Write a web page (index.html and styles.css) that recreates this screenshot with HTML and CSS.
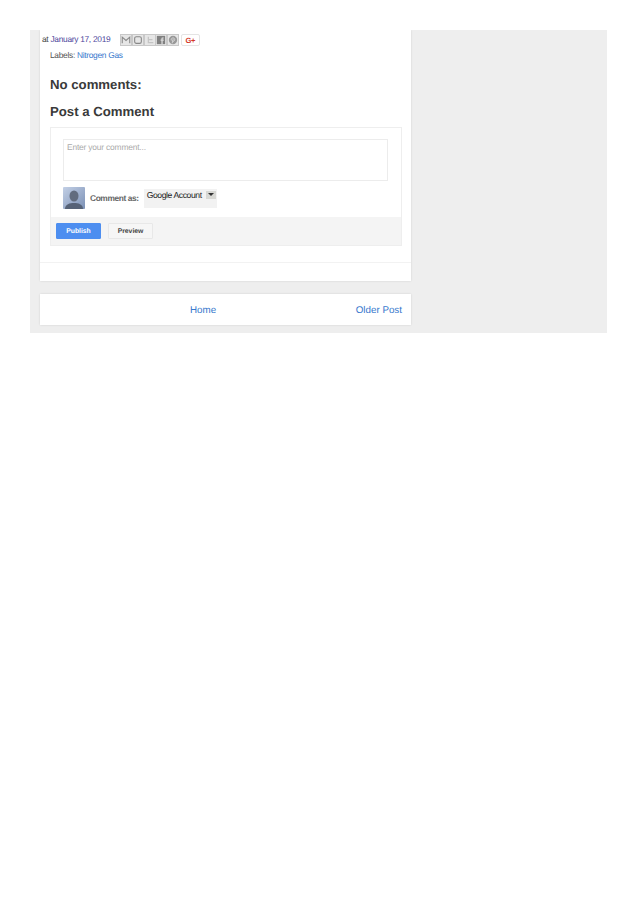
FILE: index.html
```html
<!DOCTYPE html>
<html lang="en">
<head>
    <meta charset="UTF-8">
    <title>Post</title>
    <link rel="stylesheet" href="styles.css">
</head>
<body>
    <div class="page">
        <div class="card post-card">
            <div class="post-meta">
                <span class="post-date">at <a class="date-link" href="#">January 17, 2019</a></span>
                <div class="share-group">
                    <a class="share-btn" href="#"><svg viewBox="0 0 12 12"><path d="M1.500 10V2.500L6 6.500l4.500-4V10" fill="none" stroke="#888" stroke-width="1.300"/></svg></a>
                    <a class="share-btn" href="#"><svg viewBox="0 0 12 12"><rect x="2" y="2" width="8" height="8" rx="2" fill="none" stroke="#888" stroke-width="1.300"/></svg></a>
                    <a class="share-btn" href="#"><svg viewBox="0 0 12 12"><path d="M4 2v7h6M4 5.500h5" fill="none" stroke="#c4c4c4" stroke-width="1.500"/></svg></a>
                    <a class="share-btn" href="#"><svg viewBox="0 0 12 12"><rect x="1" y="1" width="10" height="10" fill="#808080"/><path d="M8 11V7h1.300V5.500H8V4.300h1.300V3H7.700C7 3 6.500 3.500 6.500 4.300v1.200H5.500V7h1v4z" fill="#ddd"/></svg></a>
                    <a class="share-btn" href="#"><svg viewBox="0 0 12 12"><circle cx="6" cy="6" r="5" fill="#999"/><path d="M5 10l1.300-5.500M4 6.500C3.300 4.500 5 3.300 6.500 3.500c2 .3 2 3.500.2 4-.7.1-1.200-.3-1.300-.7" fill="none" stroke="#ddd" stroke-width="1"/></svg></a>
                </div>
                <a class="gplus-btn" href="#">G+</a>
            </div>
            <div class="post-labels">Labels: <a href="#">Nitrogen Gas</a></div>
            <h3 class="no-comments">No comments:</h3>
            <h3 class="post-title">Post a Comment</h3>
            <div class="comment-box">
                <div class="comment-form">
                    <div class="comment-input">Enter your comment...</div>
                    <div class="comment-as">
                        <svg class="avatar" viewBox="0 0 22 22">
                            <defs>
                                <linearGradient id="avatarBg" x1="0" y1="0" x2="1" y2="1">
                                    <stop offset="0" stop-color="#c3d0e6"/>
                                    <stop offset="1" stop-color="#7b90b5"/>
                                </linearGradient>
                            </defs>
                            <rect width="22" height="22" rx="1" fill="url(#avatarBg)"/>
                            <ellipse cx="11" cy="9" rx="4.500" ry="5.500" fill="#626c7e"/>
                            <path d="M2 22c0-5 5-6 9-6s9 1 9 6z" fill="#566277"/>
                        </svg>
                        <span class="comment-label">Comment as:</span>
                        <div class="account-select">
                            <span>Google Account</span>
                            <span class="select-arrow"></span>
                        </div>
                    </div>
                </div>
                <div class="comment-actions">
                    <a class="btn btn-primary" href="#">Publish</a>
                    <a class="btn" href="#">Preview</a>
                </div>
            </div>
            <div class="post-footer"></div>
        </div>
        <div class="card pager">
            <a class="pager-home" href="#">Home</a>
            <a class="pager-older" href="#">Older Post</a>
        </div>
    </div>
</body>
</html>
```

FILE: styles.css
```css
body {
    font-family: 'Liberation Sans', Arial, sans-serif;
    background: white;
    margin: 0;
    text-rendering: geometricPrecision;
}

a {
    color: #3778cd;
    text-decoration: none;
}

.page {
    background: #eeeeee;
    width: 577px;
    height: 303px;
    margin: 30px 0 0 30px;
    padding: 0 0 0 10px;
    box-sizing: border-box;
    overflow: hidden;
}

.card {
    background: white;
    width: 371px;
    box-sizing: border-box;
    box-shadow: 0 0 2px rgba(0,0,0,0.12);
}

.post-card {
    height: 251px;
    margin-bottom: 13px;
    padding: 0 10px;
}

.post-meta {
    display: flex;
    align-items: center;
    height: 20px;
    margin-left: -8px;
    font-size: 8.400px;
    letter-spacing: -0.300px;
    color: #444;
}

.post-date {
    padding-bottom: 2px;
}

.date-link {
    color: #4d469c;
}

.share-group {
    display: flex;
    margin-left: 10px;
}

.share-btn {
    display: block;
    width: 12px;
    height: 12px;
    box-sizing: border-box;
    background: #e6e6e6;
    border: 1px solid #c8c8c8;
    margin-right: -0.300px;
}

.share-btn svg {
    display: block;
    width: 10px;
    height: 10px;
}

.gplus-btn {
    width: 19px;
    height: 12px;
    line-height: 12px;
    box-sizing: border-box;
    margin-left: 2px;
    text-align: center;
    background: white;
    border: 1px solid #e4e4e4;
    border-radius: 2px;
    color: #d3372b;
    font-size: 7.500px;
    font-weight: bold;
}

.post-labels {
    font-size: 8.400px;
    letter-spacing: -0.300px;
    line-height: 11px;
    color: #555;
}

.no-comments,
.post-title {
    margin: 0;
    color: #3a3a3a;
    font-size: 13.200px;
    line-height: 16px;
}

.no-comments {
    margin-top: 16px;
}

.post-title {
    margin-top: 11px;
}

.comment-box {
    width: 352px;
    margin-top: 7px;
    border: 1px solid #eee;
    box-sizing: border-box;
}

.comment-form {
    padding: 11px 13px 8px 12px;
}

.comment-input {
    width: 325px;
    height: 42px;
    padding: 2px 3px;
    box-sizing: border-box;
    border: 1px solid #ececec;
    color: #aaa;
    font-size: 8.400px;
    letter-spacing: -0.170px;
    line-height: 11px;
}

.comment-as {
    display: flex;
    align-items: center;
    margin-top: 6px;
}

.avatar {
    width: 22px;
    height: 22px;
    flex: none;
}

.comment-label {
    margin-left: 5px;
    color: #666;
    font-size: 8.400px;
    letter-spacing: -0.400px;
    font-weight: bold;
    white-space: nowrap;
}

.account-select {
    display: flex;
    justify-content: space-between;
    width: 73px;
    height: 19px;
    margin-left: 5px;
    padding: 2px 1px 0 3px;
    box-sizing: border-box;
    background: #f2f2f2;
    font-size: 8.600px;
    letter-spacing: -0.400px;
    line-height: 9px;
    color: #222;
    white-space: nowrap;
}

.select-arrow {
    width: 10px;
    height: 8px;
    background: #d8d8d4;
    position: relative;
}

/* little triangle on the select button */
.select-arrow::after {
    content: "";
    position: absolute;
    left: 2px;
    top: 2px;
    border: 3px solid transparent;
    border-top-color: #333;
    border-bottom: 0;
}

.comment-actions {
    display: flex;
    gap: 7px;
    height: 28px;
    padding: 6px 5px;
    box-sizing: border-box;
    background: #f4f4f4;
}

.btn {
    width: 45px;
    height: 16px;
    line-height: 15px;
    text-align: center;
    background: #f6f6f6;
    border: 1px solid #e8e8e8;
    box-sizing: border-box;
    border-radius: 1px;
    color: #444;
    font-size: 6.800px;
    font-weight: bold;
}

.btn-primary {
    background: #4d8ef0;
    border-color: #4d8ef0;
    color: white;
}

.post-footer {
    margin-top: 16px;
    border-top: 1px solid #f2f2f2;
    margin-left: -10px;
    margin-right: -10px;
}

.pager {
    display: flex;
    justify-content: space-between;
    height: 31px;
    line-height: 33px;
    padding: 0 9px 0 150px;
    font-size: 9.800px;
}
```
